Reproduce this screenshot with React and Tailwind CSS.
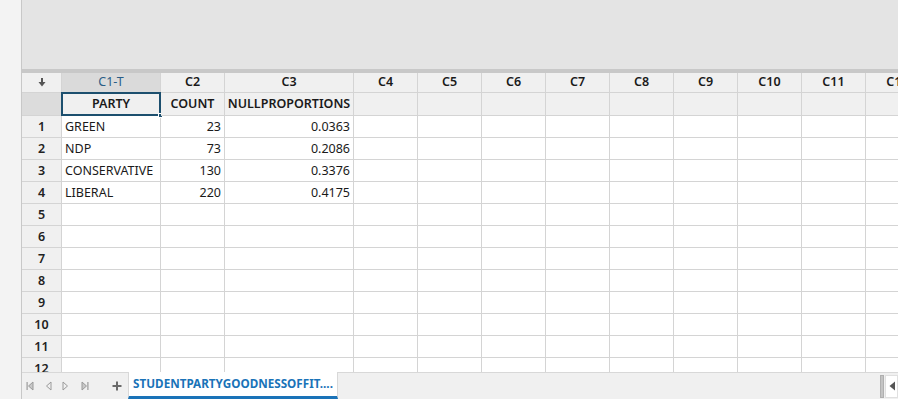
import React from "react";

const cols = [
  { w: "w-[99px]", label: "C1-T" },
  { w: "w-[64px]", label: "C2" },
  { w: "w-[129px]", label: "C3" },
  { w: "w-[64px]", label: "C4" },
  { w: "w-[64px]", label: "C5" },
  { w: "w-[64px]", label: "C6" },
  { w: "w-[64px]", label: "C7" },
  { w: "w-[64px]", label: "C8" },
  { w: "w-[64px]", label: "C9" },
  { w: "w-[64px]", label: "C10" },
  { w: "w-[64px]", label: "C11" },
  { w: "w-[64px]", label: "C12" },
];

const data = [
  ["GREEN", "23", "0.0363"],
  ["NDP", "73", "0.2086"],
  ["CONSERVATIVE", "130", "0.3376"],
  ["LIBERAL", "220", "0.4175"],
];

const font = { fontFamily: '"Noto Sans", "Open Sans", sans-serif' };

function Row({ n, vals }) {
  return (
    <div className="flex h-[22px] shrink-0">
      <div className="w-[40px] shrink-0 bg-[#f0f0f0] border-r border-b border-[#d4d4d4] flex items-center justify-center pt-[1px] text-[12.5px] font-semibold text-[#222]">
        {n}
      </div>
      {cols.map((c, i) => (
        <div
          key={i}
          className={`${c.w} shrink-0 bg-white border-r border-b border-[#d4d4d4] flex items-center px-[3px] pt-[1px] text-[12.5px] text-[#1a1a1a] ${i === 0 ? "justify-start" : "justify-end"}`}
        >
          {vals && vals[i]}
        </div>
      ))}
    </div>
  );
}

export default function App() {
  return (
    <div className="w-[898px] h-[399px] flex bg-white overflow-hidden" style={font}>
      <div className="w-[22px] shrink-0 bg-[#f3f3f3] border-r border-[#c8c8c8]" />
      <div className="flex-1 flex flex-col min-w-0 overflow-hidden">
        <div className="h-[69px] shrink-0 bg-[#e4e4e4]" />
        <div className="h-[4px] shrink-0 bg-[#c8c8c8]" />
        <div className="flex-1 min-h-0 overflow-hidden flex flex-col">
          {/* column header row */}
          <div className="flex h-[20px] shrink-0">
            <div className="w-[40px] shrink-0 bg-[#f0f0f0] border-r border-b border-[#d4d4d4] flex items-center justify-center">
              <svg width="8" height="9" viewBox="0 0 8 9">
                <rect x="3" y="0" width="2" height="4" fill="#555" />
                <path d="M0.5 4 L7.5 4 L4 8.5 Z" fill="#555" />
              </svg>
            </div>
            {cols.map((c, i) => (
              <div
                key={i}
                className={`${c.w} shrink-0 border-r border-b border-[#d4d4d4] flex items-center justify-center text-[12.5px] ${i === 0 ? "bg-[#dadada] text-[#2a5d86]" : "bg-[#f0f0f0] text-[#1a1a1a] font-semibold"}`}
              >
                {c.label}
              </div>
            ))}
          </div>
          {/* names row */}
          <div className="flex h-[23px] shrink-0">
            <div className="w-[40px] shrink-0 bg-[#dcdcdc] border-r border-b border-[#d4d4d4]" />
            {cols.map((c, i) => (
              <div
                key={i}
                className={`${c.w} shrink-0 bg-[#f0f0f0] border-r border-b border-[#d4d4d4] flex items-center justify-center text-[12.5px] font-semibold text-[#1a1a1a] relative whitespace-nowrap`}
              >
                {["PARTY", "COUNT", "NULLPROPORTIONS"][i]}
                {i === 0 && (
                  <>
                    <div className="absolute left-[-1px] top-[-1px] right-[-1px] bottom-[-1px] border-2 border-[#1c4f6e]" />
                    <div className="absolute right-[-3px] bottom-[-3px] w-[5px] h-[5px] bg-[#1c4f6e] border border-white" />
                  </>
                )}
              </div>
            ))}
          </div>
          {Array.from({ length: 12 }).map((_, r) => (
            <Row key={r} n={r + 1} vals={data[r]} />
          ))}
        </div>
        {/* tab bar */}
        <div className="h-[27px] shrink-0 bg-[#f0f0f0] border-t border-[#d8d8d8] flex items-stretch relative">
          <div className="flex items-center pl-[4px] shrink-0">
            <svg width="8" height="10" viewBox="0 0 8 10">
              <rect x="0.5" y="1" width="1.2" height="8" fill="#9a9a9a" />
              <path d="M7 1 L2.5 5 L7 9 Z" fill="#c8c8c8" stroke="#9a9a9a" strokeWidth="1" />
            </svg>
            <svg className="ml-[11px]" width="7" height="10" viewBox="0 0 7 10">
              <path d="M6 1 L1.5 5 L6 9 Z" fill="none" stroke="#9a9a9a" strokeWidth="1" />
            </svg>
            <svg className="ml-[10px]" width="7" height="10" viewBox="0 0 7 10">
              <path d="M1 1 L5.5 5 L1 9 Z" fill="none" stroke="#9a9a9a" strokeWidth="1" />
            </svg>
            <svg className="ml-[12px]" width="8" height="10" viewBox="0 0 8 10">
              <path d="M1 1 L5.5 5 L1 9 Z" fill="#c8c8c8" stroke="#9a9a9a" strokeWidth="1" />
              <rect x="6.3" y="1" width="1.2" height="8" fill="#9a9a9a" />
            </svg>
            <svg className="ml-[23px]" width="10" height="10" viewBox="0 0 10 10">
              <rect x="4" y="0.5" width="2" height="9" fill="#6a6a6a" />
              <rect x="0.5" y="4" width="9" height="2" fill="#6a6a6a" />
            </svg>
          </div>
          <div className="ml-[6px] w-[210px] shrink-0 bg-white border-l border-r border-[#d8d8d8] border-b-[3px] border-b-[#1a73b8] flex items-center justify-center text-[11.7px] font-bold text-[#1a73b8] mt-[-1px] whitespace-nowrap overflow-hidden">
            STUDENTPARTYGOODNESSOFFIT....
          </div>
          <div className="flex-1" />
          <div className="flex items-center gap-[1px] pr-0 py-[2px] shrink-0">
            <div className="w-[4px] h-[23px] bg-[#c4c4c4] border border-[#b0b0b0]" />
            <div className="w-[13px] h-[23px] bg-white border border-[#e0e0e0] flex items-center justify-end pr-[1px]">
              <svg width="7" height="10" viewBox="0 0 7 10">
                <path d="M6 0.5 L0.5 5 L6 9.5 Z" fill="#555" />
              </svg>
            </div>
          </div>
        </div>
      </div>
    </div>
  );
}
